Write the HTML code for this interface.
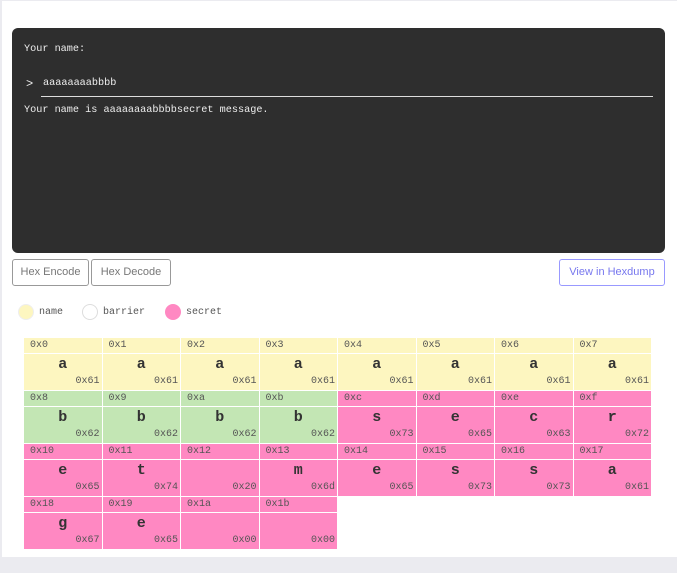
<!DOCTYPE html>
<html><head><style>
body{margin:0;width:677px;height:573px;background:#ebebf0;position:relative;overflow:hidden;font-family:"Liberation Sans",sans-serif}
#page{position:absolute;left:2px;top:1px;width:675px;height:556px;background:#fff}
#term{position:absolute;left:10px;top:27px;width:653px;height:225px;background:#2e2e2e;border-radius:6px;color:#eee;font-family:"Liberation Mono",monospace;font-size:10.2px}
.btn{position:absolute;top:258px;border:1px solid #999;border-radius:3px;background:#fff;color:#777;font-size:11px;line-height:25px;text-align:center;box-sizing:border-box;height:27px}
.leg{position:absolute;top:303px;width:16px;height:16px;border-radius:50%;box-sizing:border-box}
.lt{position:absolute;top:306px;font-family:"Liberation Mono",monospace;font-size:10px;color:#555}
#grid{position:absolute;left:24px;top:338px;display:grid;grid-template-columns:repeat(8,77.5px);gap:1px}
.c{height:52px;position:relative;font-family:"Liberation Mono",monospace;color:#555}
.c .i{position:absolute;left:6px;top:2px;font-size:10px}
.c .h{position:absolute;left:0;right:0;top:15px;height:1px;background:#fff}
.c .ch{position:absolute;left:0;right:0;top:18px;text-align:center;font-size:15px;font-weight:bold;color:#333}
.c .v{position:absolute;right:2px;top:38px;font-size:10px}
.y{background:#fdf6c0}.g{background:#c3e6b4}.p{background:#ff88c2}
</style></head><body>
<div id="page">
<div id="term">
<div style="position:absolute;left:12px;top:16px">Your name:</div>
<div style="position:absolute;left:14px;top:49px;font-size:12px">&gt;</div>
<div style="position:absolute;left:31px;top:50px">aaaaaaaabbbb</div>
<div style="position:absolute;left:29px;top:68px;width:612px;height:1px;background:#ddd"></div>
<div style="position:absolute;left:12px;top:77px">Your name is aaaaaaaabbbbsecret message.</div>
</div>
<div class="btn" style="left:10px;width:77px">Hex Encode</div>
<div class="btn" style="left:89px;width:80px">Hex Decode</div>
<div class="btn" style="left:557px;width:106px;border-color:#99f;color:#77e">View in Hexdump</div>
<div class="leg" style="left:16px;background:#fdf6c0;border:1px solid #eee"></div><div class="lt" style="left:37px">name</div>
<div class="leg" style="left:80px;background:#fff;border:1px solid #ddd"></div><div class="lt" style="left:101px">barrier</div>
<div class="leg" style="left:163px;background:#ff88c2"></div><div class="lt" style="left:184px">secret</div>
</div>
<div id="grid">
<div class="c y"><span class="i">0x0</span><div class="h"></div><div class="ch">a</div><span class="v">0x61</span></div>
<div class="c y"><span class="i">0x1</span><div class="h"></div><div class="ch">a</div><span class="v">0x61</span></div>
<div class="c y"><span class="i">0x2</span><div class="h"></div><div class="ch">a</div><span class="v">0x61</span></div>
<div class="c y"><span class="i">0x3</span><div class="h"></div><div class="ch">a</div><span class="v">0x61</span></div>
<div class="c y"><span class="i">0x4</span><div class="h"></div><div class="ch">a</div><span class="v">0x61</span></div>
<div class="c y"><span class="i">0x5</span><div class="h"></div><div class="ch">a</div><span class="v">0x61</span></div>
<div class="c y"><span class="i">0x6</span><div class="h"></div><div class="ch">a</div><span class="v">0x61</span></div>
<div class="c y"><span class="i">0x7</span><div class="h"></div><div class="ch">a</div><span class="v">0x61</span></div>
<div class="c g"><span class="i">0x8</span><div class="h"></div><div class="ch">b</div><span class="v">0x62</span></div>
<div class="c g"><span class="i">0x9</span><div class="h"></div><div class="ch">b</div><span class="v">0x62</span></div>
<div class="c g"><span class="i">0xa</span><div class="h"></div><div class="ch">b</div><span class="v">0x62</span></div>
<div class="c g"><span class="i">0xb</span><div class="h"></div><div class="ch">b</div><span class="v">0x62</span></div>
<div class="c p"><span class="i">0xc</span><div class="h"></div><div class="ch">s</div><span class="v">0x73</span></div>
<div class="c p"><span class="i">0xd</span><div class="h"></div><div class="ch">e</div><span class="v">0x65</span></div>
<div class="c p"><span class="i">0xe</span><div class="h"></div><div class="ch">c</div><span class="v">0x63</span></div>
<div class="c p"><span class="i">0xf</span><div class="h"></div><div class="ch">r</div><span class="v">0x72</span></div>
<div class="c p"><span class="i">0x10</span><div class="h"></div><div class="ch">e</div><span class="v">0x65</span></div>
<div class="c p"><span class="i">0x11</span><div class="h"></div><div class="ch">t</div><span class="v">0x74</span></div>
<div class="c p"><span class="i">0x12</span><div class="h"></div><div class="ch"></div><span class="v">0x20</span></div>
<div class="c p"><span class="i">0x13</span><div class="h"></div><div class="ch">m</div><span class="v">0x6d</span></div>
<div class="c p"><span class="i">0x14</span><div class="h"></div><div class="ch">e</div><span class="v">0x65</span></div>
<div class="c p"><span class="i">0x15</span><div class="h"></div><div class="ch">s</div><span class="v">0x73</span></div>
<div class="c p"><span class="i">0x16</span><div class="h"></div><div class="ch">s</div><span class="v">0x73</span></div>
<div class="c p"><span class="i">0x17</span><div class="h"></div><div class="ch">a</div><span class="v">0x61</span></div>
<div class="c p"><span class="i">0x18</span><div class="h"></div><div class="ch">g</div><span class="v">0x67</span></div>
<div class="c p"><span class="i">0x19</span><div class="h"></div><div class="ch">e</div><span class="v">0x65</span></div>
<div class="c p"><span class="i">0x1a</span><div class="h"></div><div class="ch"></div><span class="v">0x00</span></div>
<div class="c p"><span class="i">0x1b</span><div class="h"></div><div class="ch"></div><span class="v">0x00</span></div>
</div>
</body></html>
